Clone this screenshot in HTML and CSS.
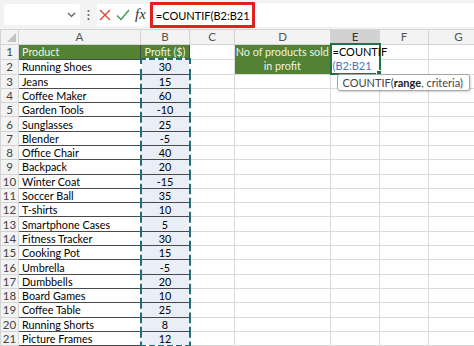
FILE: index.html
```html
<!DOCTYPE html>
<html lang="en">
<head>
    <meta charset="UTF-8">
    <meta name="viewport" content="width=device-width, initial-scale=1.0">
    <title>COUNTIF</title>
    <link rel="stylesheet" href="styles.css">
</head>
<body>
    <div class="formula-bar">
        <div class="name-box">
            <svg width="9" height="6" viewBox="0 0 9 6"><path d="M1 1l3.5 3.5L8 1" fill="none" stroke="#555" stroke-width="1.2"/></svg>
        </div>
        <div class="grip">
            <svg width="3" height="12" viewBox="0 0 3 12"><circle cx="1.5" cy="2" r="1.1" fill="#666"/><circle cx="1.5" cy="6" r="1.1" fill="#666"/><circle cx="1.5" cy="10" r="1.1" fill="#666"/></svg>
        </div>
        <div class="fx-buttons">
            <svg width="12" height="12" viewBox="0 0 12 12"><path d="M1 1l10 10M11 1L1 11" stroke="#e0443a" stroke-width="1.4"/></svg>
            <svg width="14" height="12" viewBox="0 0 14 12"><path d="M1 6.5l4 4L13 1" fill="none" stroke="#3f9b51" stroke-width="1.4"/></svg>
            <span class="fx">fx</span>
        </div>
        <div class="formula">
            <div class="formula-input">=COUNTIF(B2:B21</div>
        </div>
    </div>

    <table class="sheet">
        <colgroup>
            <col style="width:18px">
            <col style="width:122px">
            <col style="width:49px">
            <col style="width:45px">
            <col style="width:96px">
            <col style="width:49px">
            <col style="width:49px">
            <col style="width:60px">
        </colgroup>
        <tr class="col-heads">
            <th class="corner"><span class="tri"></span></th>
            <th>A</th><th>B</th><th>C</th><th>D</th><th class="active">E</th><th>F</th><th>G</th>
        </tr>
        <tr>
            <th class="row-head">1</th>
            <td class="data head">Product</td>
            <td class="data head center">Profit ($)</td>
            <td></td>
            <td class="head center note" rowspan="2">No of products sold<br>in profit</td>
            <td class="editing" rowspan="2">
                =COUNTIF<br><span class="paren">(</span><span class="ref">B2:B21</span>
                <div class="tooltip">COUNTIF(<b>range</b>, criteria)</div>
                <span class="handle"></span>
            </td>
            <td></td><td></td>
        </tr>
    </table>
    <script>
        const products = [
            ['Running Shoes', 30], ['Jeans', 15], ['Coffee Maker', 60], ['Garden Tools', -10],
            ['Sunglasses', 25], ['Blender', -5], ['Office Chair', 40], ['Backpack', 20],
            ['Winter Coat', -15], ['Soccer Ball', 35], ['T-shirts', 10], ['Smartphone Cases', 5],
            ['Fitness Tracker', 30], ['Cooking Pot', 15], ['Umbrella', -5], ['Dumbbells', 20],
            ['Board Games', 10], ['Coffee Table', 25], ['Running Shorts', 8], ['Picture Frames', 12]
        ];
        const table = document.querySelector('.sheet');
        products.forEach((p, i) => {
            const row = table.insertRow();
            let sel = 'data center sel';
            if (i === 0) sel += ' sel-top';
            if (i === products.length - 1) sel += ' sel-bottom';
            let html = '<th class="row-head">' + (i + 2) + '</th>' +
                '<td class="data">' + p[0] + '</td>' +
                '<td class="' + sel + '">' + p[1] + '</td>' +
                '<td></td>';
            if (i > 0) html += '<td></td><td></td>';
            html += '<td></td><td></td>';
            row.innerHTML = html;
        });
    </script>
</body>
</html>
```

FILE: styles.css
```css
body {
    margin: 0;
    background: #fff;
    font-family: Lato, "Open Sans", sans-serif;
    overflow: hidden;
}
.formula-bar {
    display: flex;
    align-items: center;
    height: 29px;
    background: #f3f3f3;
    padding: 0 0 0 4px;
    box-sizing: border-box;
}
.name-box {
    width: 76px;
    height: 21px;
    background: #fff;
    border-radius: 3px;
    display: flex;
    align-items: center;
    justify-content: flex-end;
    padding-right: 4px;
    box-sizing: border-box;
}
.grip {
    width: 14px;
    display: flex;
    justify-content: center;
    margin-left: 1px;
}
.fx-buttons {
    display: flex;
    align-items: center;
    gap: 5px;
    height: 22px;
    background: #fff;
    padding: 0 4px 0 2px;
    margin-left: 2px;
}
.fx {
    font-family: "Liberation Serif", serif;
    font-style: italic;
    font-size: 15px;
    color: #333;
}
.formula {
    flex: 1;
    height: 24px;
    background: #fff;
    display: flex;
}
.formula-input {
    border: 3px solid #e3201e;
    width: 105px;
    box-sizing: border-box;
    height: 26px;
    margin-top: -1px;
    padding: 4px 0 0 3px;
    font-size: 11px;
    color: #000;
    background: #fff;
}
.sheet {
    border-collapse: collapse;
    table-layout: fixed;
    width: 488px;
    font-size: 10.8px;
}
.sheet tr {
    height: 14.3px;
}
.sheet .col-heads {
    height: 14px;
}
.sheet td, .sheet th {
    border: 1px solid #dadada;
    padding: 0 3px;
    line-height: 13px;
    white-space: nowrap;
    overflow: hidden;
    color: #000;
    font-weight: normal;
}
.col-heads th {
    background: #f3f3f3;
    color: #555;
    font-size: 11.5px;
    text-align: center;
    border-color: #d4d4d4;
}
.col-heads th.active {
    background: #d2d2d2;
    color: #333;
    border-bottom: 2px solid #217346;
}
.corner {
    position: relative;
}
.tri {
    position: absolute;
    right: 2px;
    bottom: 2px;
    border-left: 9px solid transparent;
    border-bottom: 9px solid #c2c2c2;
}
.row-head {
    background: #f3f3f3;
    color: #444 !important;
    font-size: 11.5px;
    text-align: center;
    padding: 0 !important;
    border-color: #d4d4d4 !important;
}
.sheet td.data {
    border: 1px solid #4a4a4a;
}
.sheet td.head {
    background: #548235;
    color: #edf4e6;
}
.center {
    text-align: center;
}
.sheet td.sel {
    background: #e9eef7;
    border-left: 2px dashed #1f6d78;
    border-right: 2px dashed #1f6d78;
}
.sheet td.sel-top {
    border-top: 2px dashed #1f6d78;
}
.sheet td.sel-bottom {
    border-bottom: 2px dashed #1f6d78;
}
.sheet td.note {
    line-height: 14px;
    padding: 0;
}
.sheet td.editing {
    position: relative;
    overflow: visible;
    border: 2px solid #217346;
    padding: 0 1px;
    line-height: 14px;
    vertical-align: top;
    font-size: 11px;
}
.ref {
    color: #4a72c9;
}
.paren {
    color: #4a72c9;
}
.handle {
    position: absolute;
    right: -3px;
    bottom: -3px;
    width: 4px;
    height: 4px;
    background: #217346;
    border: 1px solid #fff;
}
.tooltip {
    position: absolute;
    left: 5px;
    top: calc(100% + 1px);
    background: #fff;
    border: 1px solid #a6a6a6;
    border-radius: 3px;
    box-shadow: 1px 1px 2px rgba(0, 0, 0, 0.18);
    padding: 0 6px 0 5px;
    font-size: 11px;
    line-height: 15px;
    color: #444;
    white-space: nowrap;
    z-index: 2;
}
.tooltip b {
    color: #222;
}
```
